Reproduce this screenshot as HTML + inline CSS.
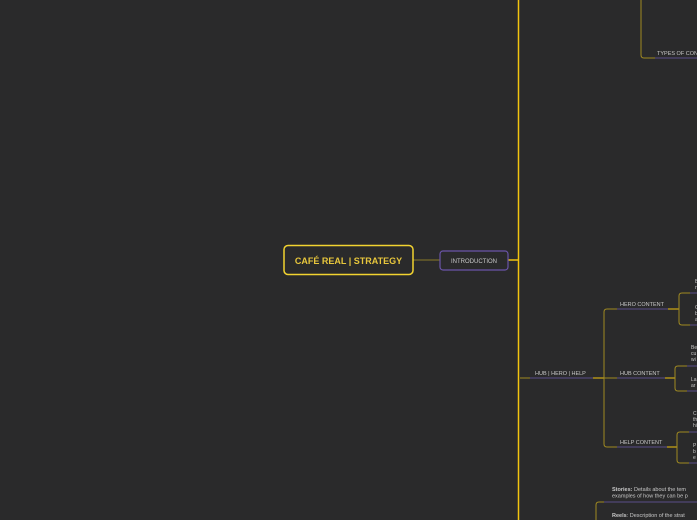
<!DOCTYPE html>
<html><head><meta charset="utf-8"><style>
html,body{margin:0;padding:0;background:#2a2a2b;width:697px;height:520px;overflow:hidden;font-family:"Liberation Sans",sans-serif}
svg{position:absolute;left:0;top:0}
</style></head><body>
<svg width="697" height="520" viewBox="0 0 697 520" font-family="Liberation Sans, sans-serif">
<rect width="697" height="520" fill="#2a2a2b"/>
<!-- main vertical -->
<line x1="518.5" y1="0" x2="518.5" y2="520" stroke="#f2c40f" stroke-width="1.5"/>
<!-- main to intro -->
<line x1="413" y1="260" x2="440" y2="260" stroke="#8a7a2a" stroke-width="1"/>
<line x1="508" y1="260" x2="518" y2="260" stroke="#f2c40f" stroke-width="1.5"/>
<rect x="284" y="245.5" width="129" height="29" rx="4" fill="#2a2a2b" stroke="#f2d330" stroke-width="1.5"/>
<text x="348.5" y="264" text-anchor="middle" fill="#e8c73c" font-size="9" font-weight="bold">CAFÉ REAL | STRATEGY</text>
<rect x="440" y="251" width="68" height="19" rx="3" fill="#2a2a2b" stroke="#6a54a8" stroke-width="1.2"/>
<text x="474" y="263" text-anchor="middle" fill="#c8c8c8" font-size="6">INTRODUCTION</text>
<!-- top branch -->
<path d="M641 0 V55 Q641 58 644 58 H655" fill="none" stroke="#a08a22" stroke-width="1"/>
<line x1="655" y1="58" x2="697" y2="58" stroke="#5a4f8a" stroke-width="1"/>
<text x="657" y="55" fill="#c8c8c8" font-size="5.5">TYPES OF CON</text>
<!-- HUB HERO HELP -->
<line x1="520" y1="378" x2="530" y2="378" stroke="#a08a22"/>
<line x1="530" y1="378" x2="593" y2="378" stroke="#5a4f8a"/>
<line x1="593" y1="378" x2="604" y2="378" stroke="#f2c40f"/>
<text x="535" y="375" fill="#c8c8c8" font-size="5.5">HUB | HERO | HELP</text>
<path d="M617 309 H607 Q604 309 604 312 V444 Q604 447 607 447 H617" fill="none" stroke="#a08a22"/>
<line x1="604" y1="378" x2="617" y2="378" stroke="#a08a22"/>
<g stroke="#5a4f8a"><line x1="617" y1="309" x2="668" y2="309"/><line x1="617" y1="378" x2="665" y2="378"/><line x1="617" y1="447" x2="667" y2="447"/></g>
<g stroke="#f2c40f"><line x1="668" y1="309" x2="679" y2="309"/><line x1="665" y1="378" x2="675" y2="378"/><line x1="667" y1="447" x2="677" y2="447"/></g>
<g fill="#c8c8c8" font-size="5.5"><text x="620" y="306">HERO CONTENT</text><text x="620" y="375">HUB CONTENT</text><text x="620" y="444">HELP CONTENT</text></g>
<g fill="none" stroke="#a08a22">
<path d="M690 293 H682 Q679 293 679 296 V322 Q679 325 682 325 H690"/>
<path d="M687 366 H678 Q675 366 675 369 V388 Q675 391 678 391 H687"/>
<path d="M689 432 H680 Q677 432 677 435 V460 Q677 463 680 463 H689"/>
</g>
<g stroke="#5a4f8a"><line x1="690" y1="293" x2="697" y2="293"/><line x1="690" y1="325" x2="697" y2="325"/><line x1="687" y1="366" x2="697" y2="366"/><line x1="687" y1="391" x2="697" y2="391"/><line x1="689" y1="432" x2="697" y2="432"/><line x1="689" y1="463" x2="697" y2="463"/></g>
<g fill="#c8c8c8" font-size="5"><text x="695" y="283">B</text><text x="695" y="289">n</text>
<text x="695" y="309">C</text><text x="695" y="315">b</text><text x="695" y="321">a</text>
<text x="691" y="349">Be</text><text x="691" y="355">cu</text><text x="691" y="361">wi</text>
<text x="691" y="381">La</text><text x="691" y="387">ar</text>
<text x="693" y="415">C</text><text x="693" y="421">th</text><text x="693" y="427">hi</text>
<text x="693" y="447">P</text><text x="693" y="453">b</text><text x="693" y="459">e</text></g>
<!-- bottom -->
<path d="M604 502 H599 Q596 502 596 505 V520" fill="none" stroke="#a08a22"/>
<line x1="604" y1="502" x2="697" y2="502" stroke="#5a4f8a"/>
<g fill="#c8c8c8" font-size="5.5"><text x="612" y="491"><tspan font-weight="bold">Stories:</tspan> Details about the tem</text>
<text x="612" y="497.5">examples of how they can be p</text>
<text x="612" y="517"><tspan font-weight="bold">Reels</tspan>: Description of the strat</text></g>
</svg>
</body></html>
